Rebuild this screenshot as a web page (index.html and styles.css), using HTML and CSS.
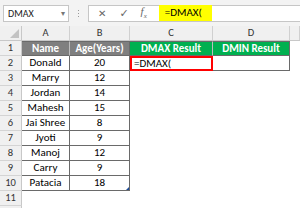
FILE: index.html
```html
<!DOCTYPE html>
<html lang="en">
<head>
    <meta charset="UTF-8">
    <title>DMAX</title>
    <link rel="stylesheet" href="styles.css">
</head>
<body>
    <div class="toolbar">
        <div class="name-box">
            <span>DMAX</span>
            <span class="drop">&#9662;</span>
        </div>
        <div class="dots"><i></i><i></i><i></i></div>
        <div class="formula-box">
            <span class="btn x">&#10005;</span>
            <span class="btn ok">&#10003;</span>
            <span class="btn fx">f<sub>x</sub></span>
            <span class="formula">=DMAX(</span>
        </div>
    </div>

    <div class="sheet">
        <div class="row head">
            <div class="corner"><span class="tri"></span></div>
            <div class="col">A</div>
            <div class="col">B</div>
            <div class="col">C</div>
            <div class="col">D</div>
            <div class="col"></div>
        </div>
        <div class="row">
            <div class="num">1</div>
            <div class="cell b top left grey">Name</div>
            <div class="cell b top grey">Age(Years)</div>
            <div class="cell b top green">DMAX Result</div>
            <div class="cell b top green">DMIN Result</div>
            <div class="cell"></div>
        </div>
        <div class="row">
            <div class="num">2</div>
            <div class="cell b left">Donald</div>
            <div class="cell b">20</div>
            <div class="cell b active">=DMAX(</div>
            <div class="cell b"></div>
            <div class="cell"></div>
        </div>
        <div class="row">
            <div class="num">3</div>
            <div class="cell b left">Marry</div>
            <div class="cell b">12</div>
        </div>
        <div class="row">
            <div class="num">4</div>
            <div class="cell b left">Jordan</div>
            <div class="cell b">14</div>
        </div>
        <div class="row">
            <div class="num">5</div>
            <div class="cell b left">Mahesh</div>
            <div class="cell b">15</div>
        </div>
        <div class="row">
            <div class="num">6</div>
            <div class="cell b left">Jai Shree</div>
            <div class="cell b">8</div>
        </div>
        <div class="row">
            <div class="num">7</div>
            <div class="cell b left">Jyoti</div>
            <div class="cell b">9</div>
        </div>
        <div class="row">
            <div class="num">8</div>
            <div class="cell b left">Manoj</div>
            <div class="cell b">12</div>
        </div>
        <div class="row">
            <div class="num">9</div>
            <div class="cell b left">Carry</div>
            <div class="cell b">9</div>
        </div>
        <div class="row">
            <div class="num">10</div>
            <div class="cell b left">Patacia</div>
            <div class="cell b handle">18</div>
        </div>
        <div class="row">
            <div class="num">11</div>
        </div>
        <div class="row last">
            <div class="num"></div>
        </div>
    </div>
</body>
</html>
```

FILE: styles.css
```css
body {
    margin: 0;
    width: 300px;
    height: 208px;
    overflow: hidden;
    background: #fff;
    font-family: Calibri, Carlito, Lato, "Liberation Sans", sans-serif;
    color: #000;
}

/* formula bar */
.toolbar {
    display: flex;
    align-items: center;
    height: 26px;
    background: #f3f3f3;
    padding-left: 3px;
    box-sizing: border-box;
}

.name-box {
    display: flex;
    align-items: center;
    justify-content: space-between;
    width: 66px;
    height: 17px;
    box-sizing: border-box;
    background: #fff;
    border: 1px solid #c6c6c6;
    padding: 0 3px 0 4px;
    font-size: 10px;
    color: #222;
}

.drop {
    font-size: 8px;
    color: #777;
}

.dots {
    display: flex;
    flex-direction: column;
    gap: 2px;
    margin: 0 9px 0 9px;
}

.dots i {
    display: block;
    width: 1px;
    height: 1px;
    background: #999;
}

.formula-box {
    flex: 1;
    display: flex;
    align-items: center;
    height: 17px;
    box-sizing: border-box;
    background: #fff;
    border: 1px solid #c6c6c6;
    border-right: none;
}

.btn {
    color: #666;
    font-size: 11px;
    font-family: "DejaVu Sans", sans-serif;
}

.btn.x {
    margin-left: 9px;
    font-size: 10px;
}

.btn.ok {
    margin-left: 13px;
}

.btn.fx {
    margin-left: 12px;
    font-family: "Liberation Serif", serif;
    font-style: italic;
    font-size: 11px;
}

.btn.fx sub {
    font-size: 7px;
}

.formula {
    margin-left: 12px;
    background: #ffff00;
    height: 16px;
    line-height: 16px;
    padding: 0 10px 0 6px;
    font-size: 11px;
}

/* sheet */
.row {
    display: grid;
    grid-template-columns: 22px 48px 60px 83px 77px 10px;
    height: 15px;
}

.row.head {
    height: 14px;
    background: #f0f0f0;
    border-bottom: 1px solid #c8c8c8;
}

.row.last {
    height: 3px;
    overflow: hidden;
}

.corner {
    position: relative;
    border-right: 1px solid #c8c8c8;
}

.tri {
    position: absolute;
    right: 2px;
    bottom: 2px;
    width: 0;
    height: 0;
    border-left: 9px solid transparent;
    border-bottom: 9px solid #c3c3c3;
}

.col {
    border-right: 1px solid #d0d0d0;
    text-align: center;
    font-size: 10.5px;
    line-height: 14px;
    color: #333;
}

.num {
    background: #f0f0f0;
    border-right: 1px solid #c8c8c8;
    border-bottom: 1px solid #d4d4d4;
    text-align: center;
    font-size: 10.5px;
    line-height: 14px;
    color: #333;
}

.cell {
    box-sizing: border-box;
    text-align: center;
    font-size: 11px;
    line-height: 14px;
    white-space: nowrap;
    overflow: hidden;
}

.cell.b {
    border-right: 1px solid #6a6a6a;
    border-bottom: 1px solid #6a6a6a;
}

.cell.top {
    border-top: 1px solid #6a6a6a;
    line-height: 13px;
}

.cell.grey {
    background: #7f7f7f;
    color: #fff;
    font-weight: bold;
    border-right-color: #bdbdbd;
}

.cell.green {
    background: #00b050;
    color: #fff;
    font-weight: bold;
    border-right-color: #bdbdbd;
}

.cell.green + .cell.green {
    border-right-color: #6a6a6a;
}

.cell.grey + .cell.grey {
    border-right-color: #6a6a6a;
}

.cell.active {
    text-align: left;
    padding-left: 2px;
    border: 2px solid #ff0000;
    line-height: 11px;
}

.cell.handle {
    position: relative;
}

.cell.handle::after {
    content: "";
    position: absolute;
    right: 0;
    bottom: 0;
    border-left: 3px solid transparent;
    border-bottom: 3px solid #1f4e9a;
}
```
